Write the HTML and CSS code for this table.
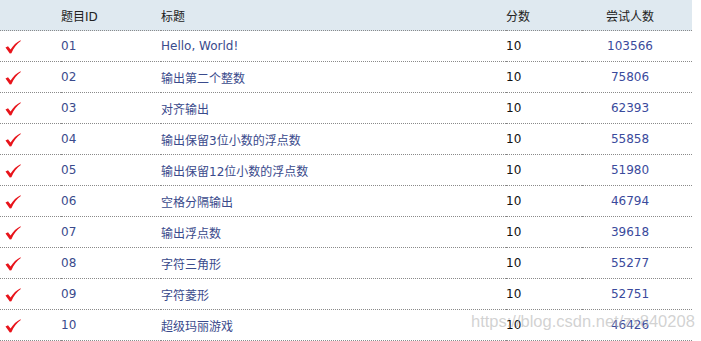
FILE: index.html
```html
<!DOCTYPE html>
<html>
<head>
<meta charset="utf-8">
<link rel="stylesheet" href="styles.css">
</head>
<body>
<div class="wrap">
<table class="problems">
<thead>
<tr><th class="c-ok"></th><th class="c-id">题目ID</th><th class="c-title">标题</th><th class="c-score">分数</th><th class="c-tries">尝试人数</th></tr>
</thead>
<tbody>
<tr><td class="c-ok"><svg class="tick" viewBox="0 0 16 14"><path d="M0.5 7.5 L3 6.2 L5.6 9.6 C8 5.6 11.6 2.2 15.5 0.3 L15.8 1 C12 3.4 8.8 7.6 6.4 13.3 L4.8 13.6 Z" fill="#e8141b"/></svg></td><td class="c-id">01</td><td class="c-title">Hello, World!</td><td class="c-score">10</td><td class="c-tries">103566</td></tr>
<tr><td class="c-ok"><svg class="tick" viewBox="0 0 16 14"><path d="M0.5 7.5 L3 6.2 L5.6 9.6 C8 5.6 11.6 2.2 15.5 0.3 L15.8 1 C12 3.4 8.8 7.6 6.4 13.3 L4.8 13.6 Z" fill="#e8141b"/></svg></td><td class="c-id">02</td><td class="c-title">输出第二个整数</td><td class="c-score">10</td><td class="c-tries">75806</td></tr>
<tr><td class="c-ok"><svg class="tick" viewBox="0 0 16 14"><path d="M0.5 7.5 L3 6.2 L5.6 9.6 C8 5.6 11.6 2.2 15.5 0.3 L15.8 1 C12 3.4 8.8 7.6 6.4 13.3 L4.8 13.6 Z" fill="#e8141b"/></svg></td><td class="c-id">03</td><td class="c-title">对齐输出</td><td class="c-score">10</td><td class="c-tries">62393</td></tr>
<tr><td class="c-ok"><svg class="tick" viewBox="0 0 16 14"><path d="M0.5 7.5 L3 6.2 L5.6 9.6 C8 5.6 11.6 2.2 15.5 0.3 L15.8 1 C12 3.4 8.8 7.6 6.4 13.3 L4.8 13.6 Z" fill="#e8141b"/></svg></td><td class="c-id">04</td><td class="c-title">输出保留3位小数的浮点数</td><td class="c-score">10</td><td class="c-tries">55858</td></tr>
<tr><td class="c-ok"><svg class="tick" viewBox="0 0 16 14"><path d="M0.5 7.5 L3 6.2 L5.6 9.6 C8 5.6 11.6 2.2 15.5 0.3 L15.8 1 C12 3.4 8.8 7.6 6.4 13.3 L4.8 13.6 Z" fill="#e8141b"/></svg></td><td class="c-id">05</td><td class="c-title">输出保留12位小数的浮点数</td><td class="c-score">10</td><td class="c-tries">51980</td></tr>
<tr><td class="c-ok"><svg class="tick" viewBox="0 0 16 14"><path d="M0.5 7.5 L3 6.2 L5.6 9.6 C8 5.6 11.6 2.2 15.5 0.3 L15.8 1 C12 3.4 8.8 7.6 6.4 13.3 L4.8 13.6 Z" fill="#e8141b"/></svg></td><td class="c-id">06</td><td class="c-title">空格分隔输出</td><td class="c-score">10</td><td class="c-tries">46794</td></tr>
<tr><td class="c-ok"><svg class="tick" viewBox="0 0 16 14"><path d="M0.5 7.5 L3 6.2 L5.6 9.6 C8 5.6 11.6 2.2 15.5 0.3 L15.8 1 C12 3.4 8.8 7.6 6.4 13.3 L4.8 13.6 Z" fill="#e8141b"/></svg></td><td class="c-id">07</td><td class="c-title">输出浮点数</td><td class="c-score">10</td><td class="c-tries">39618</td></tr>
<tr><td class="c-ok"><svg class="tick" viewBox="0 0 16 14"><path d="M0.5 7.5 L3 6.2 L5.6 9.6 C8 5.6 11.6 2.2 15.5 0.3 L15.8 1 C12 3.4 8.8 7.6 6.4 13.3 L4.8 13.6 Z" fill="#e8141b"/></svg></td><td class="c-id">08</td><td class="c-title">字符三角形</td><td class="c-score">10</td><td class="c-tries">55277</td></tr>
<tr><td class="c-ok"><svg class="tick" viewBox="0 0 16 14"><path d="M0.5 7.5 L3 6.2 L5.6 9.6 C8 5.6 11.6 2.2 15.5 0.3 L15.8 1 C12 3.4 8.8 7.6 6.4 13.3 L4.8 13.6 Z" fill="#e8141b"/></svg></td><td class="c-id">09</td><td class="c-title">字符菱形</td><td class="c-score">10</td><td class="c-tries">52751</td></tr>
<tr><td class="c-ok"><svg class="tick" viewBox="0 0 16 14"><path d="M0.5 7.5 L3 6.2 L5.6 9.6 C8 5.6 11.6 2.2 15.5 0.3 L15.8 1 C12 3.4 8.8 7.6 6.4 13.3 L4.8 13.6 Z" fill="#e8141b"/></svg></td><td class="c-id">10</td><td class="c-title">超级玛丽游戏</td><td class="c-score">10</td><td class="c-tries">46426</td></tr>
</tbody>
</table>
<div class="watermark">https://blog.csdn.net/zx840208</div>
</div>
</body>
</html>
```
FILE: styles.css
```css
html, body {
  margin: 0;
  padding: 0;
  background: #fff;
}
.wrap {
  position: relative;
  width: 701px;
  height: 341px;
  overflow: hidden;
}
.problems {
  width: 692px;
  border-collapse: collapse;
  table-layout: fixed;
  font-family: "DejaVu Sans", Verdana, "Noto Sans CJK SC", sans-serif;
  font-size: 12px;
}
.problems th {
  background: #dfe9f0;
  height: 30px;
  padding: 0;
  font-weight: normal;
  color: #222;
  text-align: left;
  border-bottom: 1px dotted #8a8a8a;
}
.problems td {
  height: 30px;
  padding: 0;
  border-bottom: 1px dotted #8a8a8a;
  color: #3a4a8c;
}
.c-ok { width: 61px; }
.c-id { width: 100px; }
.c-title { width: 345px; }
.c-score { width: 76px; }
.problems td.c-score { color: #111; }
.problems .c-tries { text-align: center; padding-right: 14px; }
.problems td.c-tries { color: #3a4a9c; }
td.c-ok { padding-left: 0; }
.tick {
  display: block;
  width: 16px;
  height: 14px;
  margin-left: 5px;
  margin-top: 1px;
}
.watermark {
  position: absolute;
  left: 471px;
  top: 312px;
  font-family: "Liberation Sans", Arial, sans-serif;
  font-size: 16.5px;
  color: rgba(180, 180, 180, 0.6);
  white-space: nowrap;
}
```
